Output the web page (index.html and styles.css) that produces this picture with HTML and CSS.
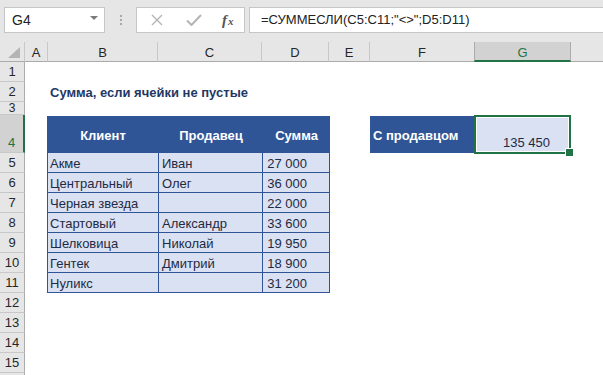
FILE: index.html
```html
<!DOCTYPE html>
<html lang="ru">
<head>
<meta charset="utf-8">
<title>СУММЕСЛИ</title>
<link rel="stylesheet" href="styles.css">
</head>
<body>
<div class="app">
  <div class="fbar">
    <div class="namebox"><span class="nb-text">G4</span><span class="dd"></span></div>
    <div class="grip"><i></i><i></i><i></i></div>
    <div class="btns">
      <svg class="ic" width="12" height="12" viewBox="0 0 12 12"><path d="M1 1 L11 11 M11 1 L1 11" stroke="#b4b4b4" stroke-width="1.4" fill="none"/></svg>
      <svg class="ic" width="16" height="12" viewBox="0 0 16 12"><path d="M1 6.5 L5.5 11 L15 1" stroke="#b4b4b4" stroke-width="2" fill="none"/></svg>
      <span class="fx"><i>f</i><i class="fx-x">x</i></span>
    </div>
    <div class="formula">=СУММЕСЛИ(C5:C11;"&lt;&gt;";D5:D11)</div>
  </div>

  <div class="sheet">
    <div class="corner"><span class="tri"></span></div>
    <div class="ch">A</div>
    <div class="ch">B</div>
    <div class="ch">C</div>
    <div class="ch">D</div>
    <div class="ch">E</div>
    <div class="ch">F</div>
    <div class="ch ch-sel">G</div>
    <div class="ch ch-last"></div>

    <div class="rh">1</div>
    <div class="rh">2</div>
    <div class="rh rh-short">3</div>
    <div class="rh rh-sel">4</div>
    <div class="rh">5</div>
    <div class="rh">6</div>
    <div class="rh">7</div>
    <div class="rh">8</div>
    <div class="rh">9</div>
    <div class="rh">10</div>
    <div class="rh">11</div>
    <div class="rh">12</div>
    <div class="rh">13</div>
    <div class="rh">14</div>
    <div class="rh">15</div>
    <div class="rh"></div>

    <div class="title">Сумма, если ячейки не пустые</div>

    <div class="tbl">
      <div class="th">Клиент</div>
      <div class="th">Продавец</div>
      <div class="th">Сумма</div>

      <div class="td first">Акме</div><div class="td">Иван</div><div class="td num">27 000</div>
      <div class="td first">Центральный</div><div class="td">Олег</div><div class="td num">36 000</div>
      <div class="td first">Черная звезда</div><div class="td"></div><div class="td num">22 000</div>
      <div class="td first">Стартовый</div><div class="td">Александр</div><div class="td num">33 600</div>
      <div class="td first">Шелковица</div><div class="td">Николай</div><div class="td num">19 950</div>
      <div class="td first">Гентек</div><div class="td">Дмитрий</div><div class="td num">18 900</div>
      <div class="td first">Нуликс</div><div class="td"></div><div class="td num">31 200</div>
    </div>

    <div class="lbl">С продавцом</div>
    <div class="sel">135 450</div>
  </div>
</div>
</body>
</html>
```

FILE: styles.css
```css
* { box-sizing: border-box; }
html, body { margin: 0; padding: 0; }
body {
  width: 603px;
  height: 375px;
  overflow: hidden;
  background: #ffffff;
  font-family: "Liberation Sans", Arial, sans-serif;
}
.app { width: 603px; height: 375px; overflow: hidden; }

/* formula bar */
.fbar {
  height: 42px;
  background: #e6e6e6;
  display: flex;
  align-items: flex-start;
  padding-top: 7px;
  padding-left: 4px;
}
.namebox {
  width: 101px;
  height: 26px;
  background: #fff;
  border: 1px solid #c6c6c6;
  display: flex;
  align-items: center;
  justify-content: space-between;
  padding: 0 6px 0 7px;
  font-size: 14px;
  color: #222;
}
.dd {
  width: 0; height: 0;
  border-left: 4px solid transparent;
  border-right: 4px solid transparent;
  border-top: 4px solid #7a7a7a;
  margin-top: -4px;
}
.grip {
  width: 31px;
  height: 26px;
  display: flex;
  flex-direction: column;
  align-items: center;
  justify-content: center;
  gap: 2px;
}
.grip i {
  display: block;
  width: 2px; height: 2px;
  background: #a8a8a8;
}
.btns {
  width: 109px;
  height: 26px;
  background: #fff;
  border: 1px solid #c6c6c6;
  display: flex;
  align-items: center;
  padding-left: 14px;
  gap: 0;
}
.btns .ic:first-child { margin-right: 23px; }
.btns .ic:nth-child(2) { margin-right: 20px; }
.fx {
  font-family: "Liberation Serif", "Times New Roman", serif;
  font-size: 15px;
  color: #555;
  font-weight: bold;
  display: flex;
  align-items: baseline;
}
.fx .fx-x { font-size: 11px; margin-left: 1px; }
.formula {
  flex: 1;
  margin-left: 4px;
  height: 26px;
  background: #fff;
  border: 1px solid #c6c6c6;
  border-right: none;
  padding-left: 11px;
  font-size: 13px;
  line-height: 24px;
  color: #222;
  white-space: nowrap;
}

/* sheet grid */
.sheet {
  display: grid;
  grid-template-columns: 25px 23px 110px 104px 67px 41px 105px 96px 1fr;
  grid-template-rows: 20px 20px 20px 13px 38px repeat(11, 20px) 20px;
  font-size: 13px;
}
.corner {
  background: #e6e6e6;
  border-bottom: 1px solid #ababab;
  border-right: 1px solid #c8c8c8;
  position: relative;
}
.tri {
  position: absolute;
  right: 4px;
  bottom: 3px;
  width: 0; height: 0;
  border-left: 12px solid transparent;
  border-bottom: 11px solid #b4b4b4;
}
.ch {
  background: #e6e6e6;
  border-bottom: 1px solid #ababab;
  border-right: 1px solid #c8c8c8;
  display: flex;
  align-items: center;
  justify-content: center;
  color: #262626;
  padding-top: 2px;
}
.ch-sel {
  background: #d2d2d2;
  border-right: 1px solid #ababab;
  border-left: 1px solid #ababab;
  margin-left: -1px;
  border-bottom: 2px solid #217346;
  color: #217346;
}
.ch-last { border-right: none; }
.rh {
  grid-column: 1;
  background: #e6e6e6;
  border-bottom: 1px solid #c8c8c8;
  border-right: 1px solid #ababab;
  display: flex;
  align-items: flex-end;
  justify-content: center;
  color: #262626;
  padding-bottom: 2px;
  line-height: 15px;
  overflow: hidden;
}
.rh-short {
  line-height: 12px;
  padding-bottom: 0;
  font-size: 12px;
}
.rh-sel {
  background: #d2d2d2;
  border-right: 2px solid #217346;
  color: #217346;
}

.title {
  grid-column: 3 / 9;
  grid-row: 3;
  font-weight: bold;
  color: #1f3864;
  display: flex;
  align-items: center;
  padding-left: 2px;
  padding-top: 1px;
}

.tbl {
  grid-column: 3 / 6;
  grid-row: 5 / 13;
  margin-left: -1px;
  width: 283px;
  display: grid;
  grid-template-columns: 112px 104px 67px;
  grid-template-rows: 38px repeat(7, 20px);
}
.th {
  background: #2f5597;
  color: #fff;
  font-weight: bold;
  display: flex;
  align-items: center;
  justify-content: center;
  padding-top: 1px;
  margin-top: 1px;
}
.td {
  background: #d9e1f2;
  border-right: 1px solid #2f5597;
  border-bottom: 1px solid #2f5597;
  color: #1f2a44;
  display: flex;
  align-items: center;
  padding-left: 3px;
  padding-top: 1px;
  white-space: nowrap;
}
.td.first { border-left: 1px solid #2f5597; padding-left: 2px; }
.td.num { justify-content: flex-end; padding-right: 22px; }

.lbl {
  grid-column: 7;
  grid-row: 5;
  margin-top: 1px;
  background: #2f5597;
  color: #fff;
  font-weight: bold;
  display: flex;
  align-items: center;
  padding-left: 3px;
  padding-top: 1px;
}
.sel {
  grid-column: 8;
  grid-row: 5;
  background: #d9e1f2;
  position: relative;
  display: flex;
  align-items: flex-end;
  justify-content: flex-end;
  padding-right: 21px;
  padding-bottom: 3px;
  color: #1f2a44;
}
.sel::after {
  content: "";
  position: absolute;
  left: -1px; top: 0; right: 0; bottom: -1px;
  border: 2px solid #217346;
  box-shadow: inset 0 0 0 1px #ffffff;
}
.sel::before {
  content: "";
  position: absolute;
  right: -3px;
  bottom: -4px;
  width: 7px;
  height: 7px;
  background: #217346;
  border: 1px solid #ffffff;
  z-index: 1;
}
```
